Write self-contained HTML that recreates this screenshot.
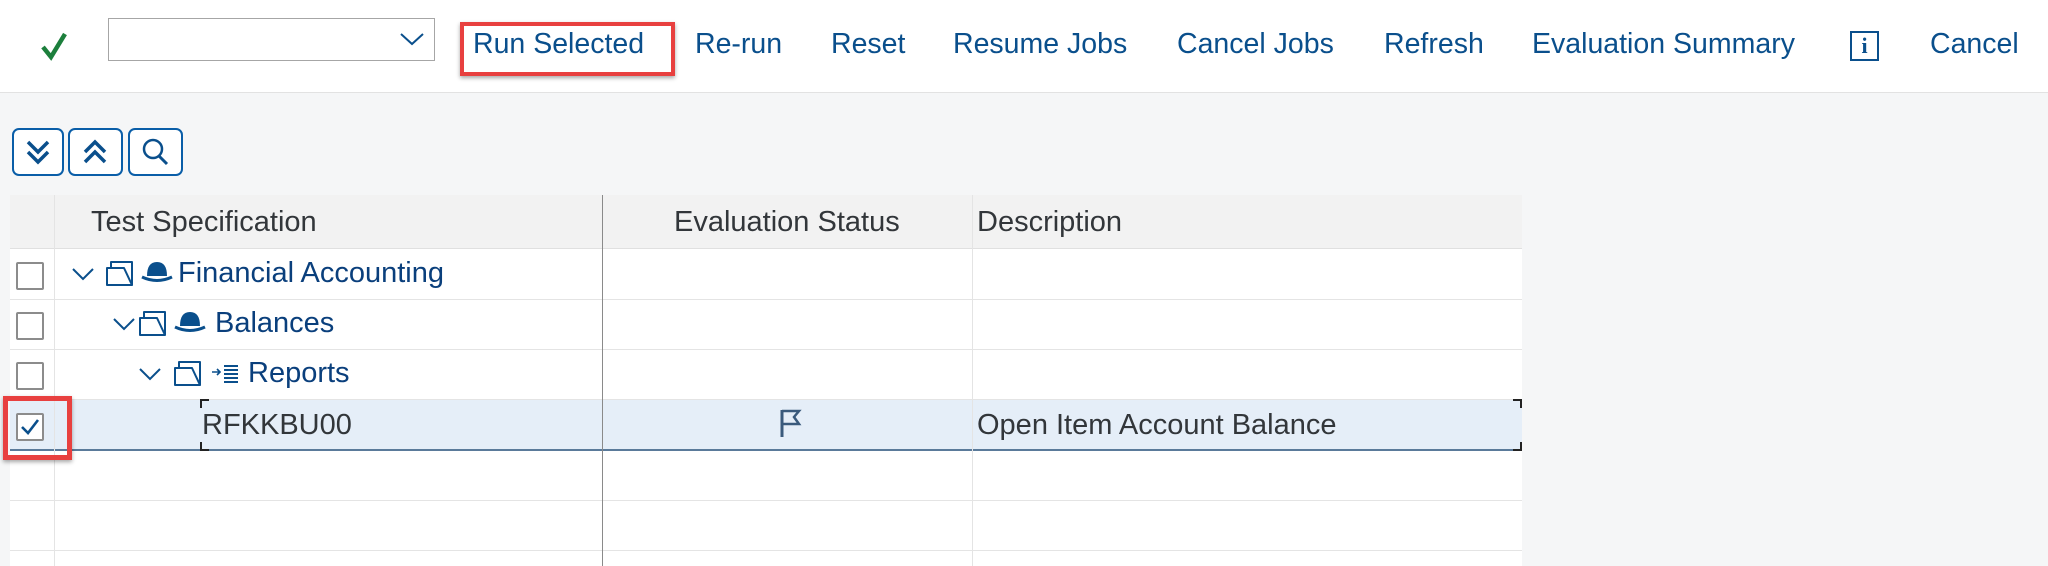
<!DOCTYPE html>
<html><head><meta charset="utf-8"><style>
*{margin:0;padding:0;box-sizing:border-box}
body{width:2048px;height:566px;overflow:hidden;background:#f5f6f7;font-family:"Liberation Sans",Arial,sans-serif;position:relative}
.tb{position:absolute;left:0;top:0;width:2048px;height:93px;background:#fff;border-bottom:1px solid #e2e2e2}
.lbl{position:absolute;top:26px;font-size:28.5px;color:#0a4f8c;white-space:nowrap;line-height:36px}
.abs{position:absolute}
.tbl{position:absolute;left:10px;top:195px;width:1512px;height:371px;background:#fff}
.hdr{position:absolute;left:0;top:0;width:1512px;height:54px;background:#f2f2f2;border-bottom:1px solid #e0e0e0}
.ht{position:absolute;top:11px;font-size:29px;color:#32363a;white-space:nowrap}
.row{position:absolute;left:0;width:1512px;border-bottom:1px solid #e4e4e4}
.cb{position:absolute;left:6px;width:28px;height:28px;border:2px solid #8c8c8c;background:#fff;border-radius:2px}
.tx{position:absolute;font-size:29px;white-space:nowrap;line-height:32px}
.blue{color:#0a3f7c}
.dark{color:#32363a}
.sbtn{position:absolute;top:128px;height:48px;border:2px solid #0a5ea8;border-radius:7px;background:#fff}
</style></head><body>
<div class="tb">
<svg class="abs" style="left:41px;top:31px" width="26" height="30" viewBox="0 0 26 30"><path d="M2 16 L10 26 L24 3" stroke="#1c7f3c" stroke-width="4.5" fill="none"/></svg>
<div class="abs" style="left:108px;top:18px;width:327px;height:43px;border:1px solid #a6a6a6;background:#fff"></div>
<svg class="abs" style="left:400px;top:32px" width="24" height="14" viewBox="0 0 24 14"><path d="M1 2 L12 12 L23 2" stroke="#0a4f8c" stroke-width="2" fill="none"/></svg>
<div class="abs" style="left:460px;top:22px;width:215px;height:54px;border:4px solid #e8403f;box-shadow:0 2px 4px rgba(0,0,0,.35)"></div>
<div class="lbl" style="left:473px">Run Selected</div>
<div class="lbl" style="left:695px">Re-run</div>
<div class="lbl" style="left:831px">Reset</div>
<div class="lbl" style="left:953px">Resume Jobs</div>
<div class="lbl" style="left:1177px">Cancel Jobs</div>
<div class="lbl" style="left:1384px">Refresh</div>
<div class="lbl" style="left:1532px">Evaluation Summary</div>
<div class="abs" style="left:1850px;top:31px;width:29px;height:30px;border:2px solid #0a4f8c;color:#0a4f8c;font:bold 22px 'Liberation Serif',serif;text-align:center;line-height:26px">i</div>
<div class="lbl" style="left:1930px">Cancel</div>
</div>
<div class="sbtn" style="left:12px;width:52px"><svg width="48" height="44" viewBox="0 0 48 44"><path d="M14 12 L24 22 L34 12 M14 22 L24 32 L34 22" stroke="#0a4f8c" stroke-width="3.5" fill="none"/></svg></div>
<div class="sbtn" style="left:68px;width:55px"><svg width="51" height="44" viewBox="0 0 51 44"><path d="M15 22 L25 12 L35 22 M15 32 L25 22 L35 32" stroke="#0a4f8c" stroke-width="3.5" fill="none"/></svg></div>
<div class="sbtn" style="left:128px;width:55px"><svg width="51" height="44" viewBox="0 0 51 44"><circle cx="23" cy="19" r="9" stroke="#0a4f8c" stroke-width="2.5" fill="none"/><path d="M29 26 L37 34" stroke="#0a4f8c" stroke-width="3"/></svg></div>

<div class="tbl">
<div class="hdr">
<div class="ht" style="left:81px">Test Specification</div>
<div class="ht" style="left:664px">Evaluation Status</div>
<div class="ht" style="left:967px">Description</div>
</div>
<div class="row" style="top:54px;height:51px"></div>
<div class="row" style="top:105px;height:50px"></div>
<div class="row" style="top:155px;height:50px"></div>
<div class="row" style="top:205px;height:51px;background:#e5eef8;border-bottom:2px solid #5a7a9a"></div>
<div class="row" style="top:256px;height:50px"></div>
<div class="row" style="top:306px;height:50px"></div>
<div class="abs" style="left:44px;top:0;width:1px;height:371px;background:#e4e4e4"></div>
<div class="abs" style="left:592px;top:0;width:1px;height:371px;background:#8a8a8a"></div>
<div class="abs" style="left:962px;top:0;width:1px;height:371px;background:#e4e4e4"></div>

<div class="cb" style="top:67px"></div>
<div class="cb" style="top:117px"></div>
<div class="cb" style="top:167px"></div>
<div class="cb" style="top:218px"><svg width="24" height="24" viewBox="0 0 24 24" style="position:absolute;left:0;top:0"><path d="M4 12 L10 18 L20 5" stroke="#0a4f8c" stroke-width="2.6" fill="none"/></svg></div>

<!-- row 1 -->
<svg class="abs" style="left:62px;top:72px" width="22" height="14"><path d="M1 2 L11 12 L21 2" stroke="#0a4f8c" stroke-width="2" fill="none"/></svg>
<svg class="abs" style="left:94px;top:65px" width="31" height="27" viewBox="0 0 31 27"><path d="M7 7 L7 2 L28 2 L28 25 M3 8 L20 8 L28 25 L3 25 Z" stroke="#0a4f8c" stroke-width="2" fill="none" stroke-linejoin="round"/></svg>
<svg class="abs" style="left:131px;top:65px" width="32" height="24" viewBox="0 0 32 24"><path d="M6 16 Q6 2 16 2 Q26 2 26 16 Z" fill="#0a4f8c"/><path d="M1 17 Q16 24 31 17" stroke="#0a4f8c" stroke-width="3" fill="none"/></svg>
<div class="tx blue" style="left:168px;top:62px">Financial Accounting</div>
<!-- row 2 -->
<svg class="abs" style="left:103px;top:122px" width="22" height="14"><path d="M1 2 L11 12 L21 2" stroke="#0a4f8c" stroke-width="2" fill="none"/></svg>
<svg class="abs" style="left:127px;top:115px" width="31" height="27" viewBox="0 0 31 27"><path d="M7 7 L7 2 L28 2 L28 25 M3 8 L20 8 L28 25 L3 25 Z" stroke="#0a4f8c" stroke-width="2" fill="none" stroke-linejoin="round"/></svg>
<svg class="abs" style="left:164px;top:115px" width="32" height="24" viewBox="0 0 32 24"><path d="M6 16 Q6 2 16 2 Q26 2 26 16 Z" fill="#0a4f8c"/><path d="M1 17 Q16 24 31 17" stroke="#0a4f8c" stroke-width="3" fill="none"/></svg>
<div class="tx blue" style="left:205px;top:112px">Balances</div>
<!-- row 3 -->
<svg class="abs" style="left:129px;top:172px" width="22" height="14"><path d="M1 2 L11 12 L21 2" stroke="#0a4f8c" stroke-width="2" fill="none"/></svg>
<svg class="abs" style="left:162px;top:165px" width="31" height="27" viewBox="0 0 31 27"><path d="M7 7 L7 2 L28 2 L28 25 M3 8 L20 8 L28 25 L3 25 Z" stroke="#0a4f8c" stroke-width="2" fill="none" stroke-linejoin="round"/></svg>
<svg class="abs" style="left:201px;top:168px" width="32" height="22" viewBox="0 0 32 22"><path d="M1 9 L9 9 M6 6 L9 9 L6 12" stroke="#0a4f8c" stroke-width="1.6" fill="none"/><path d="M13 3 L27 3 M13 7 L27 7 M13 11 L27 11 M13 15 L27 15 M13 19 L27 19" stroke="#0a4f8c" stroke-width="2"/></svg>
<div class="tx blue" style="left:238px;top:162px">Reports</div>
<!-- row 4 -->
<div class="tx dark" style="left:192px;top:214px">RFKKBU00</div>
<svg class="abs" style="left:769px;top:213px" width="24" height="30" viewBox="0 0 24 30"><path d="M3 2 L3 29" stroke="#3a5a7c" stroke-width="3"/><path d="M3 3 L20 3 L15 9 L20 16 L3 16" stroke="#3a5a7c" stroke-width="2.5" fill="none"/></svg>
<div class="tx dark" style="left:967px;top:214px">Open Item Account Balance</div>
<!-- focus corners -->
<svg class="abs" style="left:189px;top:203px" width="1326" height="55"><path d="M2 10 L2 2 L10 2 M2 44 L2 52 L10 52 M1314 2 L1322 2 L1322 10 M1314 52 L1322 52 L1322 44" stroke="#222" stroke-width="2" fill="none"/></svg>
</div>
<div class="abs" style="left:3px;top:396px;width:69px;height:64px;border:5px solid #e8403f;box-shadow:0 2px 4px rgba(0,0,0,.35)"></div>
</body></html>
